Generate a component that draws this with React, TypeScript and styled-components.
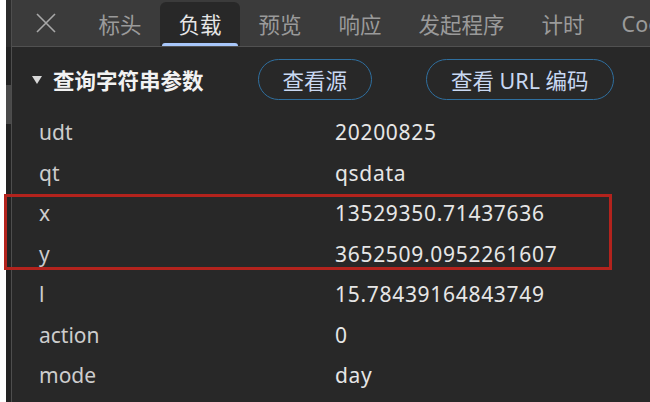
import React from "react";
import styled, { createGlobalStyle } from "styled-components";

const GlobalStyle = createGlobalStyle`
  html, body {
    margin: 0;
    padding: 0;
    background: #ffffff;
    overflow: hidden;
  }
`;

const Page = styled.div`
  position: relative;
  width: 650px;
  height: 402px;
  display: flex;
  padding-left: 6px;
  box-sizing: border-box;
  background: #ffffff;
  font-family: "Noto Sans", "Noto Sans CJK SC", sans-serif;
`;

const Gutter = styled.div`
  width: 5px;
  background: #232323;
  border-right: 1px solid #4e4e4e;
  display: flex;
  flex-direction: column;
`;

const GutterTop = styled.div`
  height: 47px;
  background: #2c2c2c;
`;

const Thumb = styled.div`
  margin-top: 38px;
  height: 39px;
  background: #4a4a4a;
`;

const Main = styled.div`
  flex: 1;
  min-width: 0;
  display: flex;
  flex-direction: column;
  background: #282828;
`;

const TabBar = styled.div`
  height: 46px;
  background: #3b3b3b;
  border-bottom: 1px solid #515151;
  display: flex;
  align-items: stretch;
  overflow: hidden;
  white-space: nowrap;
`;

const Close = styled.div`
  flex: none;
  width: 68px;
  display: flex;
  align-items: center;
  padding-left: 23px;
  box-sizing: border-box;
`;

const Tab = styled.div<{ $active?: boolean }>`
  flex: none;
  position: relative;
  display: flex;
  align-items: center;
  padding: 0 18.5px 2px;
  margin-top: 2px;
  font-size: 21.5px;
  color: ${(p) => (p.$active ? "#e6e6e6" : "#9a9a9a")};
  background: ${(p) => (p.$active ? "#282828" : "transparent")};
  border-radius: 6px 6px 0 0;

  &::after {
    content: "";
    display: ${(p) => (p.$active ? "block" : "none")};
    position: absolute;
    left: 2px;
    right: 2px;
    bottom: 0;
    height: 3px;
    border-radius: 3px 3px 0 0;
    background: #a8c7fa;
  }
`;

const Header = styled.div`
  height: 65px;
  display: flex;
  align-items: center;
  gap: 54px;
  padding-left: 20px;
`;

const Title = styled.div`
  display: flex;
  align-items: center;
  gap: 11px;
  font-size: 21.5px;
  font-weight: 700;
  color: #f2f2f2;
`;

const Triangle = styled.span`
  width: 0;
  height: 0;
  border-left: 5px solid transparent;
  border-right: 5px solid transparent;
  border-top: 8px solid #d8d8d8;
`;

const Pill = styled.div`
  height: 41px;
  box-sizing: border-box;
  padding: 0 24px;
  display: flex;
  align-items: center;
  border: 1.5px solid #2f6f9f;
  border-radius: 21px;
  font-size: 21.5px;
  color: #c9d8f2;
`;

const Rows = styled.div`
  display: flex;
  flex-direction: column;
`;

const Row = styled.div`
  height: 40.5px;
  display: flex;
  align-items: center;
  padding-left: 27px;
  font-size: 21px;
`;

const Key = styled.span`
  width: 296px;
  color: #cdcdcd;
`;

const Value = styled.span`
  color: #e6e6e6;
  letter-spacing: 0.7px;
`;

const Highlight = styled.div`
  position: absolute;
  left: 4px;
  top: 194px;
  width: 608px;
  height: 76px;
  box-sizing: border-box;
  border: 3px solid #b3231d;
  pointer-events: none;
`;

const CloseIcon = () => (
  <svg width="22" height="22" viewBox="0 0 22 22">
    <path d="M2 2L20 20M20 2L2 20" stroke="#a8a8a8" strokeWidth="1.6" />
  </svg>
);

const tabs = ["标头", "负载", "预览", "响应", "发起程序", "计时", "Cookie"];

const params: [string, string][] = [
  ["udt", "20200825"],
  ["qt", "qsdata"],
  ["x", "13529350.71437636"],
  ["y", "3652509.0952261607"],
  ["l", "15.78439164843749"],
  ["action", "0"],
  ["mode", "day"],
];

const App: React.FC = () => {
  return (
    <Page>
      <GlobalStyle />

      {/* LEFT EDGE */}
      <Gutter>
        <GutterTop />
        <Thumb />
      </Gutter>

      <Main>
        {/* TABS */}
        <TabBar>
          <Close>
            <CloseIcon />
          </Close>
          {tabs.map((t) => (
            <Tab key={t} $active={t === "负载"}>
              {t}
            </Tab>
          ))}
        </TabBar>

        {/* QUERY STRING */}
        <Header>
          <Title>
            <Triangle />
            查询字符串参数
          </Title>
          <Pill>查看源</Pill>
          <Pill>查看 URL 编码</Pill>
        </Header>

        <Rows>
          {params.map(([k, v]) => (
            <Row key={k}>
              <Key>{k}</Key>
              <Value>{v}</Value>
            </Row>
          ))}
        </Rows>
      </Main>

      <Highlight />
    </Page>
  );
};

export default App;
